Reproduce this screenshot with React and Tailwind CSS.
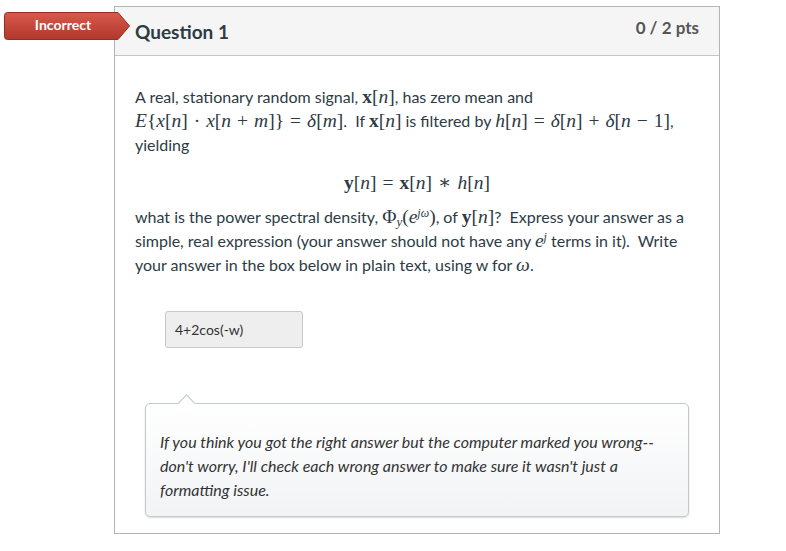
import React from 'react';

const mathFont = "font-['Liberation_Serif','DejaVu_Serif',serif]";

const M = ({ children }) => (
  <span className={`${mathFont} text-[19.5px] leading-none whitespace-nowrap`}>{children}</span>
);
const I = ({ children }) => <i className="italic">{children}</i>;
const B = ({ children }) => <b className="font-bold">{children}</b>;
const Op = ({ children }) => <span className="mx-[6px]">{children}</span>;

const Badge = () => (
  <div className="absolute left-[4px] top-[12px] w-[127px] h-[28px]">
    <svg width="127" height="28" viewBox="0 0 127 28" className="absolute inset-0">
      <defs>
        <linearGradient id="bad" x1="0" y1="0" x2="0" y2="1">
          <stop offset="0" stopColor="#d8594c" />
          <stop offset="1" stopColor="#b1382c" />
        </linearGradient>
      </defs>
      <path
        d="M3.5 0.5 H114 L125.5 14 L114 27.5 H3.5 Q0.5 27.5 0.5 24.5 V3.5 Q0.5 0.5 3.5 0.5 Z"
        fill="url(#bad)"
        stroke="#962c22"
      />
    </svg>
    <div className="relative w-[118px] h-full flex items-center justify-center pb-[4px] text-white text-[14px] font-bold">
      Incorrect
    </div>
  </div>
);

export default function App() {
  return (
    <div className="relative min-h-[551px] bg-white font-['Lato','Noto_Sans',sans-serif] text-[#2d3b45]">
      <Badge />
      <div className="pl-[114px] pt-[6px]">
        <div className="w-[606px] border border-[#b4b4b4]">
          <div className="h-[49px] bg-[#f5f5f5] border-b border-[#c4c4c4] flex justify-between px-[20px]">
            <div className="pt-[13px] text-[19px] leading-[24px] font-bold text-[#2d3b45]">Question 1</div>
            <div className="pt-[11px] text-[17px] leading-[20px] font-bold text-[#555]">0 / 2 pts</div>
          </div>

          <div className="px-[20px] pt-[29px] pb-[16px] text-[16px] leading-[24px]">
            <p>
              A real, stationary random signal, <M><B>x</B>[<I>n</I>]</M>, has zero mean and
              <br />
              <M>
                <I>E</I>{'{'}<I>x</I>[<I>n</I>]<Op>·</Op><I>x</I>[<I>n</I><Op>+</Op><I>m</I>]{'}'}<Op>=</Op><I>δ</I>[<I>m</I>]
              </M>
              .&nbsp; If <M><B>x</B>[<I>n</I>]</M> is filtered by{' '}
              <M>
                <I>h</I>[<I>n</I>]<Op>=</Op><I>δ</I>[<I>n</I>]<Op>+</Op><I>δ</I>[<I>n</I><Op>−</Op>1]
              </M>
              ,
              <br />
              yielding
            </p>

            <p className="mt-[14px] text-center">
              <M>
                <B>y</B>[<I>n</I>]<Op>=</Op><B>x</B>[<I>n</I>]<Op>∗</Op><I>h</I>[<I>n</I>]
              </M>
            </p>

            <p className="mt-[10px]">
              what is the power spectral density,{' '}
              <M>
                Φ<sub className="text-[13px] italic">y</sub>(<I>e</I>
                <sup className="text-[12px] italic">jω</sup>)
              </M>
              , of <M><B>y</B>[<I>n</I>]</M>?&nbsp; Express your answer as a
              <br />
              simple, real expression (your answer should not have any{' '}
              <M>
                <I>e</I>
                <sup className="text-[12px] italic">j</sup>
              </M>{' '}
              terms in it).&nbsp; Write
              <br />
              your answer in the box below in plain text, using w for <M><I>ω</I></M>.
            </p>

            <div className="mt-[34px] ml-[30px] w-[138px] h-[37px] bg-[#eeeeee] border border-[#c8c8c8] rounded-[3px] flex items-center px-[9px] text-[14px] text-[#333]">
              4+2cos(-w)
            </div>

            <div className="relative mt-[55px] ml-[10px] w-[544px] rounded-[5px] border border-[#c3c8cc] bg-gradient-to-b from-white to-[#f2f3f5] shadow-[0_1px_2px_rgba(0,0,0,0.15)] pl-[14px] pr-[12px] pt-[26px] pb-[14px]">
              <div className="absolute left-[34px] top-[-7px] w-[13px] h-[13px] rotate-45 bg-white border-l border-t border-[#c3c8cc]" />
              <p className="italic text-[16px] leading-[24px] text-[#333]">
                If you think you got the right answer but the computer marked you wrong--
                <br />
                don't worry, I'll check each wrong answer to make sure it wasn't just a
                <br />
                formatting issue.
              </p>
            </div>
          </div>
        </div>
      </div>
    </div>
  );
}
